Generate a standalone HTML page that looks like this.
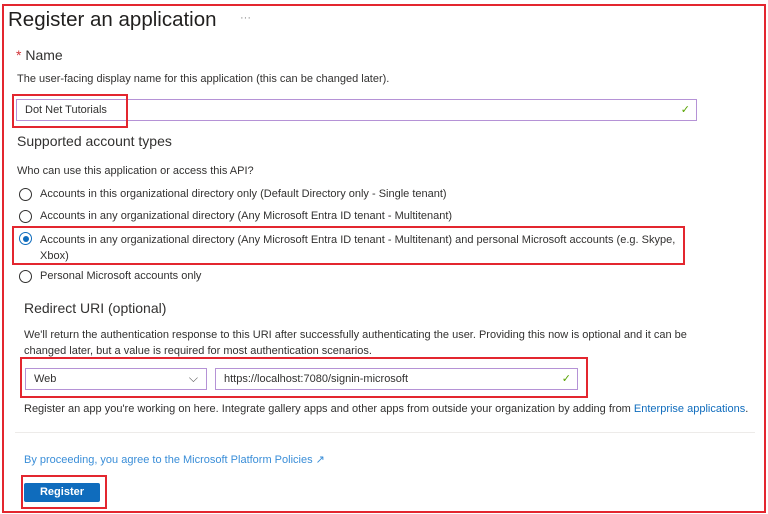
<!DOCTYPE html>
<html><head><style>
body{margin:0;width:768px;height:514px;background:#fff;font-family:"Liberation Sans",sans-serif;color:#323130;position:relative;overflow:hidden}
.a{position:absolute;white-space:nowrap}
.s{font-size:11px}
.rb{position:absolute;border:2px solid #e3262f;box-sizing:border-box}
.inp{position:absolute;border:1px solid #b592d6;box-sizing:border-box;background:#fff;font-size:11px;line-height:20px;padding-left:8px}
.r{position:absolute;width:13px;height:13px;border:1px solid #323130;border-radius:50%;box-sizing:border-box;left:19px}
</style></head><body>
<div class="rb" style="left:2px;top:4px;width:764px;height:509px"></div>
<div class="a" style="left:8px;top:8px;font-size:20.5px;color:#201f1e">Register an application</div>
<div class="a" style="left:240px;top:12px;font-size:11px;color:#888">···</div>
<div class="a" style="left:16px;top:47px;font-size:14px"><span style="color:#d13438">*</span> Name</div>
<div class="a s" style="left:17px;top:73px">The user-facing display name for this application (this can be changed later).</div>
<div class="inp" style="left:16px;top:99px;width:681px;height:22px">Dot Net Tutorials<span style="position:absolute;right:6px;color:#57a300">✓</span></div>
<div class="rb" style="left:12px;top:94px;width:116px;height:34px"></div>
<div class="a" style="left:17px;top:133px;font-size:14px">Supported account types</div>
<div class="a s" style="left:17px;top:165px">Who can use this application or access this API?</div>
<div class="r" style="top:188px"></div><div class="a s" style="left:40px;top:188px">Accounts in this organizational directory only (Default Directory only - Single tenant)</div>
<div class="r" style="top:210px"></div><div class="a s" style="left:40px;top:210px">Accounts in any organizational directory (Any Microsoft Entra ID tenant - Multitenant)</div>
<div class="r" style="top:232px;border-color:#0f6cbd"><div style="position:absolute;left:2.5px;top:2.5px;width:6px;height:6px;border-radius:50%;background:#0f6cbd"></div></div>
<div class="a s" style="left:40px;top:232px;line-height:16px">Accounts in any organizational directory (Any Microsoft Entra ID tenant - Multitenant) and personal Microsoft accounts (e.g. Skype,<br>Xbox)</div>
<div class="rb" style="left:12px;top:226px;width:673px;height:39px"></div>
<div class="r" style="top:270px"></div><div class="a s" style="left:40px;top:270px">Personal Microsoft accounts only</div>
<div class="a" style="left:24px;top:300px;font-size:14px">Redirect URI (optional)</div>
<div class="a s" style="left:24px;top:327px;line-height:16px">We'll return the authentication response to this URI after successfully authenticating the user. Providing this now is optional and it can be<br>changed later, but a value is required for most authentication scenarios.</div>
<div class="inp" style="left:25px;top:368px;width:182px;height:22px">Web<span style="position:absolute;right:8px;top:-1px;font-size:12px;color:#555">⌵</span></div>
<div class="inp" style="left:215px;top:368px;width:363px;height:22px">https://localhost:7080/signin-microsoft<span style="position:absolute;right:6px;color:#57a300">✓</span></div>
<div class="rb" style="left:20px;top:357px;width:568px;height:41px"></div>
<div class="a s" style="left:24px;top:403px">Register an app you're working on here. Integrate gallery apps and other apps from outside your organization by adding from <span style="color:#0f6cbd">Enterprise applications</span>.</div>
<div style="position:absolute;left:15px;top:432px;width:740px;height:1px;background:#edebe9"></div>
<div class="a s" style="left:24px;top:453px;color:#3a8ed8">By proceeding, you agree to the Microsoft Platform Policies ↗</div>
<div style="position:absolute;left:24px;top:483px;width:76px;height:19px;background:#0f6cbd;border-radius:2px;color:#fff;font-size:11px;font-weight:bold;text-align:center;line-height:19px">Register</div>
<div class="rb" style="left:21px;top:475px;width:86px;height:34px"></div>
</body></html>
